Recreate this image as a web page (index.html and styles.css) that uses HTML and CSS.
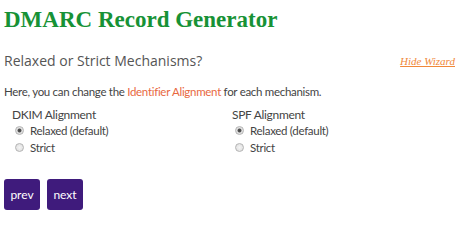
FILE: index.html
```html
<!DOCTYPE html>
<html>
<head>
<meta charset="utf-8">
<link rel="stylesheet" href="styles.css">
</head>
<body>
<div class="page">
  <h1 class="title">DMARC Record Generator</h1>
  <div class="subhead">
    <h2 class="question">Relaxed or Strict Mechanisms?</h2>
    <a class="hide" href="#">Hide Wizard</a>
  </div>
  <p class="intro">Here, you can change the <a class="term" href="#">Identifier Alignment</a> for each mechanism.</p>
  <div class="cols">
    <div class="col">
      <div class="label">DKIM Alignment</div>
      <label class="opt"><input type="radio" name="dkim" checked><span>Relaxed (default)</span></label>
      <label class="opt"><input type="radio" name="dkim"><span>Strict</span></label>
    </div>
    <div class="col">
      <div class="label">SPF Alignment</div>
      <label class="opt"><input type="radio" name="spf" checked><span>Relaxed (default)</span></label>
      <label class="opt"><input type="radio" name="spf"><span>Strict</span></label>
    </div>
  </div>
  <div class="buttons">
    <button class="btn">prev</button>
    <button class="btn">next</button>
  </div>
</div>
</body>
</html>
```
FILE: styles.css
```css
html, body { margin: 0; padding: 0; background: #fff; }
.page { padding: 6px 19px 0 4px; font-family: Lato, "Liberation Sans", sans-serif; color: #444; }
.title { margin: 0; font-family: "Liberation Serif", serif; font-weight: bold; font-size: 23px; line-height: 28px; color: #179236; }
.subhead { display: flex; justify-content: space-between; align-items: flex-start; margin-top: 17px; }
.question { margin: 0; font-family: "Open Sans", sans-serif; font-weight: normal; font-size: 14px; line-height: 19px; color: #555; }
.hide { font-family: "Liberation Serif", serif; font-style: italic; font-size: 11px; color: #f0883a; margin-top: 4px; }
.intro { margin: 14px 0 0; font-size: 11.5px; line-height: 16px; letter-spacing: -0.3px; }
.term { color: #e8683f; text-decoration: none; }
.cols { display: grid; grid-template-columns: 220px 220px; padding-left: 8px; margin-top: 7px; letter-spacing: -0.3px; }
.label { font-size: 12px; line-height: 15px; }
.opt { display: flex; align-items: center; gap: 6px; font-size: 11.5px; line-height: 17px; height: 17px; padding-left: 3px; }
.opt input { -webkit-appearance: none; appearance: none; margin: 0; width: 9px; height: 9px; border-radius: 50%; border: 1px solid #b4b4b4; background: radial-gradient(circle, #f4f4f4 0%, #dcdcdc 100%); box-sizing: border-box; flex: none; }
.opt input:checked { background: radial-gradient(circle, #444 0, #555 1.6px, #e6e6e6 2.4px, #d8d8d8 100%); }
.buttons { display: flex; gap: 7px; margin-top: 23px; }
.btn { font-family: Lato, sans-serif; font-size: 12px; color: #fff; background: #3f1b7c; border: none; border-radius: 3px; width: 36px; height: 31px; padding: 0; }
```
